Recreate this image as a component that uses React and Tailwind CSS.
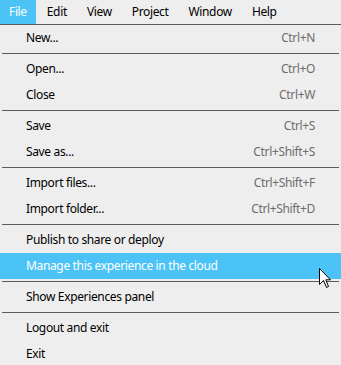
import React from "react";

const sections = [
  [["New...", "Ctrl+N"]],
  [["Open...", "Ctrl+O"], ["Close", "Ctrl+W"]],
  [["Save", "Ctrl+S"], ["Save as...", "Ctrl+Shift+S"]],
  [["Import files...", "Ctrl+Shift+F"], ["Import folder...", "Ctrl+Shift+D"]],
  [["Publish to share or deploy", ""], ["Manage this experience in the cloud", "", true]],
  [["Show Experiences panel", ""]],
  [["Logout and exit", ""], ["Exit", ""]],
];

const bar = ["File", "Edit", "View", "Project", "Window", "Help"];

export default function App() {
  return (
    <div
      className="relative w-[341px] h-[365px] overflow-hidden bg-[#eeeeee] text-[12px] tracking-[-0.35px] text-black"
      style={{ fontFamily: '"Noto Sans", "Open Sans", sans-serif' }}
    >
      <div className="flex h-[24px] items-center">
        {bar.map((b, i) => (
          <div
            key={b}
            className={
              i === 0
                ? "h-full flex items-center px-[9px] bg-[#4bc3f6] text-white"
                : "h-full flex items-center px-[9px] ml-[2px]"
            }
          >
            {b}
          </div>
        ))}
      </div>
      <div className="h-px bg-[#5c5c5c]" />
      {sections.map((sec, si) => (
        <div key={si}>
          {si > 0 && <div className="my-[2px] mx-[2px] h-px bg-[#5c5c5c]" />}
          {sec.map(([label, sc, hl]) => (
            <div
              key={label}
              className={
                hl
                  ? "h-[26px] flex items-center justify-between pl-[26px] pr-[26px] bg-[#4bc3f6] text-white"
                  : "h-[26px] flex items-center justify-between pl-[26px] pr-[26px]"
              }
            >
              <span>{label}</span>
              <span className="text-[#6d6d6d]">{sc}</span>
            </div>
          ))}
        </div>
      ))}
      <svg
        className="absolute left-[319px] top-[268px]"
        width="13"
        height="21"
        viewBox="0 0 13 21"
      >
        <path
          d="M0.5 0.5 L0.5 16.5 L4.5 12.5 L7.5 19.5 L9.5 18.5 L6.8 11.8 L11.5 11.8 Z"
          fill="white"
          stroke="black"
          strokeWidth="1"
          strokeLinejoin="miter"
        />
      </svg>
    </div>
  );
}
